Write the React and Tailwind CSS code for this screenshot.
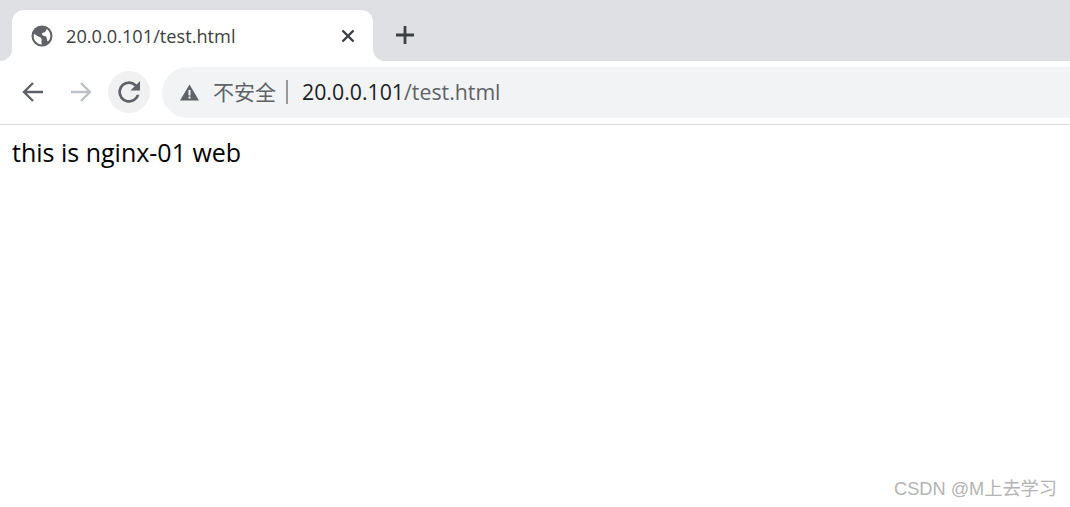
import React from "react";

const uiFont = "font-['Open_Sans','Noto_Sans_CJK_SC',sans-serif]";

const Globe = () => (
  <svg width="22" height="22" viewBox="0 0 22 22" className="shrink-0">
    <circle cx="11" cy="11" r="10.5" fill="#5f6368" />
    <path
      d="M3 9 C5 10 7 11.5 8.5 12 C10 12.5 11 14 10.5 16 C10.3 17.2 10.5 18.5 11 19.4 C6 19.4 2.5 15 2.7 11 C2.7 10.3 2.8 9.6 3 9 Z"
      fill="#ffffff"
    />
    <path
      d="M11.5 2.6 C13 2.7 14.5 3.2 15.6 4 C15.4 6 14.2 7.2 12.5 7.6 C11 8 10.6 9.2 11.5 10.2 C12.8 11.4 14.6 10.6 15.4 12 C16 13.2 15.5 14.8 16.8 16.6 C18.6 15 19.5 13 19.4 10.8 C19.2 6.4 15.6 2.8 11.5 2.6 Z"
      fill="#ffffff"
    />
  </svg>
);

const Back = ({ color, flip }) => (
  <svg width="24" height="24" viewBox="0 0 24 24" className={flip ? "rotate-180" : ""} fill="none">
    <path d="M22 12H3M12 3l-9 9 9 9" stroke={color} strokeWidth="2.4" />
  </svg>
);

const Reload = () => (
  <svg width="24" height="24" viewBox="0 0 24 24" fill="#5f6368">
    <path d="M19.6 4.4A11 11 0 0 0 12 1.2 10.8 10.8 0 1 0 22.5 14.7h-2.8A8.1 8.1 0 1 1 12 3.9c2.2 0 4.2.9 5.7 2.4L13.4 10.6H23V1z" />
  </svg>
);

const Warn = () => (
  <svg width="19" height="17" viewBox="0 0 19 17" className="shrink-0">
    <path d="M9.5 0.5 L19 16.5 H0 Z" fill="#5f6368" />
    <rect x="8.5" y="6" width="2" height="5.5" fill="#f1f3f4" />
    <rect x="8.5" y="12.5" width="2" height="2" fill="#f1f3f4" />
  </svg>
);

const Flare = ({ side }) => (
  <div className={side === "left" ? "absolute bottom-0 left-[-12px] w-3 h-3 bg-white" : "absolute bottom-0 right-[-12px] w-3 h-3 bg-white"}>
    <div className={side === "left" ? "w-full h-full bg-[#dfe0e4] rounded-br-[12px]" : "w-full h-full bg-[#dfe0e4] rounded-bl-[12px]"} />
  </div>
);

export default function App() {
  return (
    <div className={`w-[1070px] h-[507px] bg-white overflow-hidden flex flex-col relative ${uiFont}`}>
      {/* tab strip */}
      <div className="h-[61px] bg-[#dfe0e4] flex items-end pl-3 shrink-0">
        <div className="relative w-[361px] h-[51px] bg-white rounded-t-[12px] flex items-center pl-[19px] pr-[18px]">
          <Flare side="left" />
          <Flare side="right" />
          <Globe />
          <span className="ml-[13px] pt-[2px] text-[18.2px] leading-none text-[#3c4043] flex-1">20.0.0.101/test.html</span>
          <svg width="14" height="14" viewBox="0 0 14 14" fill="none">
            <path d="M1.5 1.5l11 11M12.5 1.5l-11 11" stroke="#3c4043" strokeWidth="2.4" />
          </svg>
        </div>
        <div className="h-[51px] ml-[23px] flex items-center pb-[2px]">
          <svg width="18" height="18" viewBox="0 0 18 18" fill="none">
            <path d="M9 0v18M0 9h18" stroke="#3c4043" strokeWidth="2.8" />
          </svg>
        </div>
      </div>

      {/* toolbar */}
      <div className="h-[64px] shrink-0 bg-white border-b border-[#d9d9d9] flex items-center pl-[21px] pb-[1px]">
        <Back color="#5f6368" />
        <div className="ml-[24px]">
          <Back color="#bdc1c6" flip />
        </div>
        <div className="ml-[15px] w-[42px] h-[42px] rounded-full bg-[#f1f1f1] flex items-center justify-center">
          <Reload />
        </div>
        <div className="ml-[12px] flex-1 h-[51px] rounded-l-[26px] bg-[#f1f3f4] flex items-center pl-[18px]">
          <Warn />
          <span className="ml-[14px] text-[21px] leading-none text-[#5f6368]">不安全</span>
          <span className="ml-[10px] w-[2px] h-[24px] bg-[#9a9a9a]" />
          <span className="ml-[14px] text-[21.3px] leading-none text-[#5f6368]">
            <span className="text-[#202124]">20.0.0.101</span>/test.html
          </span>
        </div>
      </div>

      {/* page */}
      <div className="flex-1 px-3 pt-[11px] text-[25px] leading-[32px] text-black">this is nginx-01 web</div>

      <div className="absolute right-[13px] bottom-[6px] font-['Liberation_Sans','Noto_Sans_CJK_SC',sans-serif] text-[18.2px] leading-[24px] text-[#b4b4b4]">CSDN @M上去学习</div>
    </div>
  );
}
